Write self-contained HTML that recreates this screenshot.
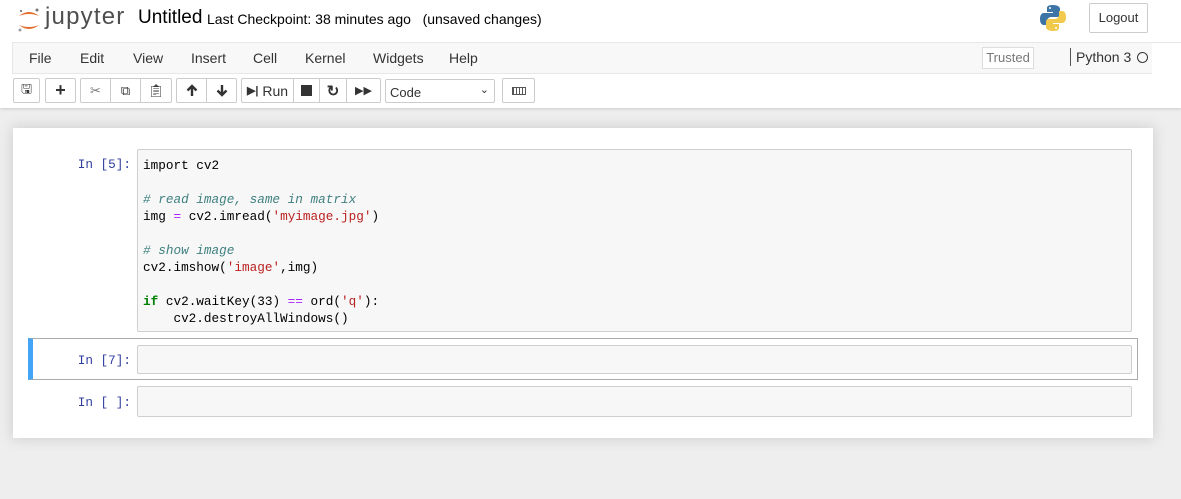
<!DOCTYPE html>
<html><head><meta charset="utf-8"><style>
*{box-sizing:border-box;margin:0;padding:0}
body{width:1181px;height:499px;background:#eee;font-family:"Liberation Sans",sans-serif;position:relative;overflow:hidden}
.a{position:absolute}
#hdr{left:0;top:0;width:1181px;height:108px;background:#fff;box-shadow:0 1px 3px rgba(0,0,0,.15)}
.btn{position:absolute;top:78px;height:25px;border:1px solid #ccc;background:#fff;border-radius:2px}
.btn span{position:absolute;top:0;height:23px;border-left:1px solid #ccc;display:flex;align-items:center;justify-content:center;font-size:13px;color:#333}
.btn span:first-child{border-left:none}
.menu{top:50px;font-size:14px;color:#333}
.code{font-family:"Liberation Mono",monospace;font-size:12.7px;line-height:17px;color:#000;white-space:pre}
.p{font-family:"Liberation Mono",monospace;font-size:12.7px;color:#303f9f;text-align:right;width:120px;left:11px}
.in{background:#f7f7f7;border:1px solid #cfcfcf;border-radius:2px;left:137px;width:995px}
.k{color:#008000;font-weight:bold}.c{color:#408080;font-style:italic}.s{color:#ba2121}.o{color:#aa22ff}
</style></head><body>
<div id="hdr" class="a"></div>
<svg class="a" style="left:16px;top:6px" width="26" height="28" viewBox="0 0 26 28">
<path d="M3 10 Q13 2 23 10 Q13 6 3 10Z" fill="#e46e2e"/><path d="M3 19 Q13 27 23 19 Q13 23 3 19Z" fill="#e46e2e"/>
<circle cx="21" cy="4" r="1.5" fill="#767677"/><circle cx="4" cy="24" r="1.5" fill="#9e9e9e"/><circle cx="5" cy="5" r="1" fill="#616262"/></svg>
<div class="a" style="left:45px;top:3px;font-size:24px;color:#4e4e4e;letter-spacing:1.2px">jupyter</div>
<div class="a" style="left:138px;top:7px;font-size:19px;color:#000">Untitled</div>
<div class="a" style="left:207px;top:11px;font-size:14px;color:#000">Last Checkpoint: 38 minutes ago&nbsp;&nbsp; (unsaved changes)</div>
<svg class="a" style="left:1039px;top:4px" width="28" height="28" viewBox="0 0 28 28">
<path d="M14 1C8 1 8 3 8 5v3h6v1H5C2 9 1 12 1 15s1 6 4 6h3v-4c0-2 2-4 4-4h6c2 0 3-1 3-3V5c0-2-2-4-7-4z" fill="#3c74a5"/>
<path d="M14 27c6 0 6-2 6-4v-3h-6v-1h9c3 0 4-3 4-6s-1-6-4-6h-3v4c0 2-2 4-4 4h-6c-2 0-3 1-3 3v5c0 2 2 4 7 4z" fill="#f0c94d"/>
<circle cx="11" cy="4" r="1" fill="#fff"/><circle cx="17" cy="24" r="1" fill="#fff"/></svg>
<div class="a" style="left:1089px;top:3px;width:59px;height:30px;border:1px solid #ccc;border-radius:2px;font-size:13px;color:#333;text-align:center;line-height:28px">Logout</div>
<div class="a" style="left:12px;top:42px;width:1181px;height:32px;background:#f8f8f8;border:1px solid #e7e7e7;border-right:none"></div>
<div class="a" style="left:1152px;top:42px;width:29px;height:32px;background:#fff;border-top:1px solid #e7e7e7"></div>
<div class="a menu" style="left:29px">File</div><div class="a menu" style="left:80px">Edit</div><div class="a menu" style="left:133px">View</div><div class="a menu" style="left:191px">Insert</div><div class="a menu" style="left:253px">Cell</div><div class="a menu" style="left:305px">Kernel</div><div class="a menu" style="left:373px">Widgets</div><div class="a menu" style="left:449px">Help</div>
<div class="a" style="left:982px;top:47px;width:52px;height:22px;border:1px solid #ddd;background:#fff;font-size:13px;color:#777;text-align:center;line-height:20px">Trusted</div>
<div class="a" style="left:1070px;top:48px;width:1px;height:18px;background:#555"></div>
<div class="a" style="left:1076px;top:49px;font-size:14px;color:#333">Python 3</div>
<div class="a" style="left:1137px;top:52px;width:11px;height:11px;border:1.5px solid #333;border-radius:50%"></div>
<div class="btn" style="left:13px;width:27px"><span style="left:0;width:25px">🖫</span></div>
<div class="btn" style="left:45px;width:31px"><span style="left:0;width:29px;font-weight:bold;font-size:18px">+</span></div>
<div class="btn" style="left:80px;width:92px"><span style="left:0;width:29px;color:#777">✂</span><span style="left:29px;width:30px">⧉</span><span style="left:59px;width:31px">📋︎</span></div>
<div class="btn" style="left:176px;width:61px"><span style="left:0;width:29px"><svg width="12" height="13" viewBox="0 0 12 13"><path d="M6 12V2M1.5 6.5L6 2l4.5 4.5" stroke="#333" stroke-width="2.4" fill="none"/></svg></span><span style="left:29px;width:30px"><svg width="12" height="13" viewBox="0 0 12 13"><path d="M6 1v10M1.5 6.5L6 11l4.5-4.5" stroke="#333" stroke-width="2.4" fill="none"/></svg></span></div>
<div class="btn" style="left:241px;width:140px"><span style="left:0;width:51px;font-size:14px"><b style="font-size:11px">▶|</b>&nbsp;Run</span><span style="left:51px;width:26px"><i style="width:11px;height:11px;background:#333;display:block"></i></span><span style="left:77px;width:27px;font-weight:bold;font-size:15px">↻</span><span style="left:104px;width:34px;font-size:11px">▶▶</span></div>
<div class="a" style="left:385px;top:79px;width:110px;height:24px;border:1px solid #ccc;border-radius:2px;background:#fff;font-size:13px;color:#333;padding:5px 4px">Code<span style="position:absolute;right:5px;top:3px;font-size:11px">&#8964;</span></div>
<div class="btn" style="left:502px;width:33px"><span style="left:0;width:31px"><i style="width:14px;height:8px;border:1px solid #555;display:block;background:repeating-linear-gradient(90deg,#555 0 1px,#fff 1px 3px)"></i></span></div>
<div class="a" style="left:13px;top:128px;width:1140px;height:310px;background:#fff;box-shadow:0 0 12px 1px rgba(87,87,87,.2)"></div>
<div class="a p" style="top:157px">In [5]:</div>
<div class="a in" style="top:149px;height:183px"></div>
<div class="a code" style="left:143px;top:157px">import cv2

<span class="c"># read image, same in matrix</span>
img <span class="o">=</span> cv2.imread(<span class="s">'myimage.jpg'</span>)

<span class="c"># show image</span>
cv2.imshow(<span class="s">'image'</span>,img)

<span class="k">if</span> cv2.waitKey(33) <span class="o">==</span> ord(<span class="s">'q'</span>):
    cv2.destroyAllWindows()</div>
<div class="a" style="left:28px;top:338px;width:1110px;height:42px;border:1px solid #ababab;border-left:5px solid #42a5f5"></div>
<div class="a p" style="top:353px">In [7]:</div>
<div class="a in" style="top:345px;height:29px"></div>
<div class="a p" style="top:395px">In [&nbsp;]:</div>
<div class="a in" style="top:386px;height:31px"></div>
</body></html>
